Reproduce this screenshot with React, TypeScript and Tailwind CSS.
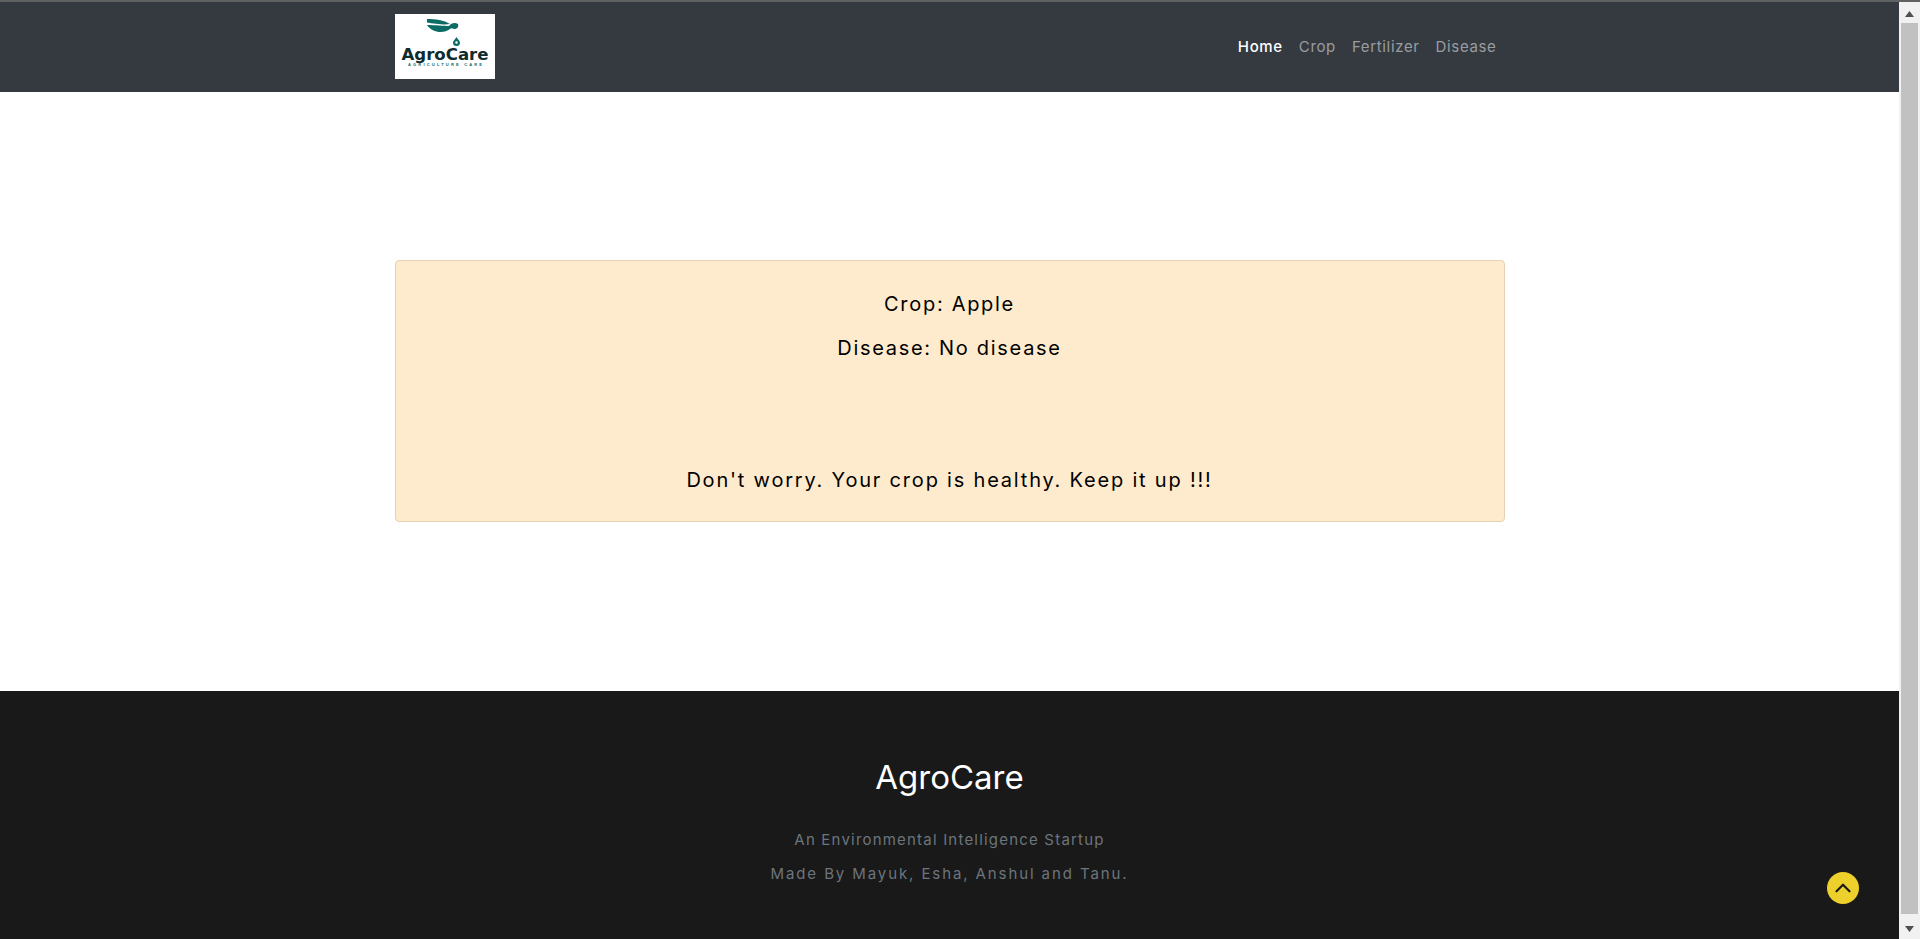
import { ChevronUp } from "lucide-react";

const links = [
  { label: "Home", active: true },
  { label: "Crop", active: false },
  { label: "Fertilizer", active: false },
  { label: "Disease", active: false },
];

const Logo = () => (
  <svg width="100" height="65" viewBox="0 0 100 65" className="bg-white shrink-0">
    <path d="M32 5 C40 5 49 6 55 10 C50 11 40 10 32 8.5 Z" fill="#0b6b66" />
    <path d="M32 11 C40 11 49 12 54 12 C56 9 60 8 63 10 C64 13 62 15 59 15 C57 14 56 14 55 15 C49 20 37 19 32 11 Z" fill="#0b6b66" />
    <path d="M61.5 23 C63 25.5 65 27 65 28.5 A3.5 3.5 0 0 1 58 28.5 C58 27 60 25.5 61.5 23 Z" fill="#0b6b66" />
    <circle cx="61.5" cy="28.5" r="1.2" fill="#ffffff" />
    <text x="50" y="45.5" textAnchor="middle" textLength="87" lengthAdjust="spacingAndGlyphs" fontFamily="'DejaVu Sans', sans-serif" fontWeight="700" fontSize="15" fill="#0f2b2d">AgroCare</text>
    <text x="50" y="52" textAnchor="middle" textLength="74" fontFamily="'Liberation Sans', sans-serif" fontWeight="700" fontSize="4" fill="#0b6b66">AGRICULTURE CARE</text>
  </svg>
);

export default function App() {
  return (
    <div className="h-screen overflow-hidden flex flex-col bg-white font-['Inter',sans-serif]">
      <div className="h-[2px] bg-[#5f6163]" />
      <div className="flex flex-1 min-h-0">
        <div className="flex-1 flex flex-col relative">
          <nav className="h-[90px] bg-[#343a40]">
            <div className="w-[1110px] mx-auto flex items-center justify-between pt-[12px]">
              <Logo />
              <ul className="flex text-[15px] tracking-[0.65px] mt-[2px]">
                {links.map((link) => (
                  <li key={link.label} className={`px-2 ${link.active ? "text-white font-medium" : "text-[#9a9da0]"}`}>
                    {link.label}
                  </li>
                ))}
              </ul>
            </div>
          </nav>

          <main className="h-[599px] pt-[168px]">
            <div className="w-[1110px] mx-auto h-[262px] bg-[#feebcd] border border-[#e5d3b3] rounded-[4px] text-center text-black text-[20px] tracking-[1.7px] leading-[44px] pt-[21px]">
              <p>Crop: Apple</p>
              <p>Disease: No disease</p>
              <p className="mt-[88px] tracking-[1.8px]">Don't worry. Your crop is healthy. Keep it up !!!</p>
            </div>
          </main>

          <footer className="flex-1 bg-[#191919] text-center pt-[65px]">
            <h2 className="text-white text-[33px] leading-[42px] font-normal">AgroCare</h2>
            <p className="text-[#6c757d] text-[15px] leading-[34px] tracking-[1.2px] mt-[25px]">An Environmental Intelligence Startup</p>
            <p className="text-[#6c757d] text-[15px] leading-[34px] tracking-[1.9px]">Made By Mayuk, Esha, Anshul and Tanu.</p>
          </footer>

          <button className="absolute left-[1827px] top-[870px] w-8 h-8 rounded-full bg-[#edd02b] flex items-center justify-center text-[#1a1a1a]">
            <ChevronUp size={26} strokeWidth={2} />
          </button>
        </div>

        <aside className="w-[21px] bg-[#f1f1f1] flex flex-col items-center">
          <svg width="13" height="21" viewBox="0 0 13 21" className="shrink-0">
            <path d="M6.5 9 L11 15 L2 15 Z" fill="#505050" />
          </svg>
          <div className="w-[17px] h-[891px] bg-[#c1c1c1]" />
          <div className="flex-1" />
          <svg width="13" height="21" viewBox="0 0 13 21" className="shrink-0">
            <path d="M2 8 L11 8 L6.5 14 Z" fill="#505050" />
          </svg>
        </aside>
      </div>
    </div>
  );
}
